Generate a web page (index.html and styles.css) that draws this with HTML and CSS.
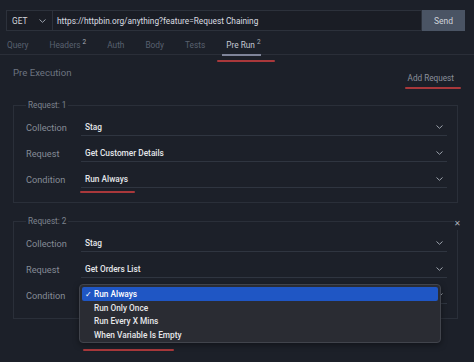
FILE: index.html
```html
<!DOCTYPE html>
<html lang="en">
<head>
  <meta charset="UTF-8">
  <meta name="viewport" content="width=device-width, initial-scale=1.0">
  <title>Pre Run</title>
  <link rel="stylesheet" href="styles.css">
</head>
<body>
  <div class="topbar">
    <div class="method">
      <span>GET</span>
      <svg class="chev" width="7" height="4" viewBox="0 0 7 4"><path d="M0.5 0.5 L3.5 3.3 L6.5 0.5" fill="none" stroke="currentColor" stroke-width="1"/></svg>
    </div>
    <div class="url">https://httpbin.org/anything?feature=Request Chaining</div>
    <button class="send">Send</button>
  </div>

  <div class="tabs">
    <span class="tab">Query</span>
    <span class="tab">Headers <sup>2</sup></span>
    <span class="tab">Auth</span>
    <span class="tab">Body</span>
    <span class="tab">Tests</span>
    <span class="tab active">Pre Run <sup>2</sup><i class="mark mark-tab"></i></span>
  </div>

  <div class="content">
    <div class="head">
      <h4>Pre Execution</h4>
      <a class="add">Add Request<i class="mark mark-add"></i></a>
    </div>

    <fieldset class="req">
      <legend>Request: 1</legend>
      <div class="row">
        <label>Collection</label>
        <div class="select"><span class="value">Stag</span><svg class="chev" width="7" height="4" viewBox="0 0 7 4"><path d="M0.5 0.5 L3.5 3.3 L6.5 0.5" fill="none" stroke="currentColor" stroke-width="1"/></svg></div>
      </div>
      <div class="row">
        <label>Request</label>
        <div class="select"><span class="value">Get Customer Details</span><svg class="chev" width="7" height="4" viewBox="0 0 7 4"><path d="M0.5 0.5 L3.5 3.3 L6.5 0.5" fill="none" stroke="currentColor" stroke-width="1"/></svg></div>
      </div>
      <div class="row">
        <label>Condition</label>
        <div class="select"><span class="value">Run Always</span><svg class="chev" width="7" height="4" viewBox="0 0 7 4"><path d="M0.5 0.5 L3.5 3.3 L6.5 0.5" fill="none" stroke="currentColor" stroke-width="1"/></svg><i class="mark mark-cond"></i></div>
      </div>
    </fieldset>

    <div class="req-wrap">
      <fieldset class="req">
        <legend>Request: 2</legend>
        <div class="row">
          <label>Collection</label>
          <div class="select"><span class="value">Stag</span><svg class="chev" width="7" height="4" viewBox="0 0 7 4"><path d="M0.5 0.5 L3.5 3.3 L6.5 0.5" fill="none" stroke="currentColor" stroke-width="1"/></svg></div>
        </div>
        <div class="row">
          <label>Request</label>
          <div class="select"><span class="value">Get Orders List</span><svg class="chev" width="7" height="4" viewBox="0 0 7 4"><path d="M0.5 0.5 L3.5 3.3 L6.5 0.5" fill="none" stroke="currentColor" stroke-width="1"/></svg></div>
        </div>
        <div class="row">
          <label>Condition</label>
          <div class="select open"><span class="value">Run Always</span><svg class="chev" width="7" height="4" viewBox="0 0 7 4"><path d="M0.5 0.5 L3.5 3.3 L6.5 0.5" fill="none" stroke="currentColor" stroke-width="1"/></svg></div>
        </div>
      </fieldset>
      <span class="close">&#x2715;</span>
      <ul class="menu">
        <li class="on"><span class="check">&#x2713;</span>Run Always</li>
        <li>Run Only Once</li>
        <li>Run Every X Mins</li>
        <li>When Variable Is Empty</li>
      </ul>
      <i class="mark mark-menu"></i>
    </div>
  </div>
</body>
</html>
```

FILE: styles.css
```css
html {
  background-color: #1c2029;
}

body {
  margin: 0;
  min-height: 362px;
  background-color: #1c2029;
  font-family: "Roboto", "Liberation Sans", sans-serif;
  color: #e3e6ea;
  font-size: 8.3px;
}

/* URL bar */
.topbar {
  display: flex;
  height: 21px;
  margin: 10px 9px 0 6px;
}

.method {
  width: 47px;
  box-sizing: border-box;
  display: flex;
  align-items: center;
  justify-content: space-between;
  padding: 0 6px 0 5px;
  border: 1px solid #2c313b;
  background-color: #1a1d25;
  color: #d3d6dc;
}

.url {
  flex: 1;
  display: flex;
  align-items: center;
  padding: 0 4px;
  border: 1px solid #2c313b;
  border-left: none;
  background-color: #1a1d25;
  color: #dadde2;
  white-space: nowrap;
  overflow: hidden;
}

.send {
  width: 43px;
  border: none;
  background-color: #4a5464;
  color: #cfd3da;
  font-family: inherit;
  font-size: 8.5px;
  padding: 0;
}

/* tabs */
.tabs {
  display: flex;
  gap: 21px;
  margin-top: 7px;
  padding-left: 7px;
  height: 16px;
  border-bottom: 1px solid #2a2e38;
  font-size: 8.3px;
}

.tab {
  position: relative;
  line-height: 14px;
  color: #596070;
}

.tab sup {
  font-size: 6.5px;
  line-height: 0;
  color: #a8adb6;
}

.tab.active {
  color: #c5c9d4;
}

.tab.active::after {
  content: "";
  position: absolute;
  left: -4px;
  right: 0;
  bottom: -2px;
  height: 2px;
  background-color: #7f8499;
}

/* red annotation strokes */
.mark {
  position: absolute;
  height: 2px;
  border-radius: 1px;
  background-color: #a9383b;
}

.mark-tab {
  left: -9px;
  width: 58px;
  top: 22px;
}

.mark-add {
  left: -3px;
  right: -7px;
  top: 15px;
}

.mark-cond {
  left: -1px;
  width: 55px;
  bottom: -6px;
}

.mark-menu {
  left: 70px;
  width: 91px;
  top: 134px;
}

/* body */
.content {
  padding: 0 16px 0 13px;
}

.head {
  display: flex;
  justify-content: space-between;
  height: 44px;
}

.head h4 {
  margin: 11px 0 0 0;
  font-size: 9.6px;
  font-weight: 400;
  line-height: 14px;
  color: #6d7480;
}

.add {
  position: relative;
  margin: 17px 4px 0 0;
  font-size: 8.2px;
  line-height: 12px;
  color: #8b909c;
}

.req {
  margin: 0;
  padding: 3px 10px 10px 12px;
  border: 1px solid #2a2f39;
}

.req legend {
  padding: 0 2px;
  margin-left: 0;
  font-size: 8.2px;
  line-height: 12px;
  color: #7d838e;
}

.req-wrap {
  position: relative;
  margin-top: 12px;
}

.close {
  position: absolute;
  right: -3px;
  top: 3px;
  padding: 1px 0;
  font-size: 8px;
  line-height: 10px;
  color: #a9aeb8;
  background-color: #1c2029;
}

.row {
  display: grid;
  grid-template-columns: 55px 1fr;
  align-items: center;
  height: 26px;
}

.row label {
  font-size: 9.2px;
  color: #858b96;
}

.select {
  position: relative;
  display: flex;
  align-items: center;
  justify-content: space-between;
  height: 18px;
  box-sizing: border-box;
  padding: 0 4px;
  border-bottom: 1px solid #2f3540;
  color: #e4e6ea;
  font-weight: 500;
}

.select.open .value {
  visibility: hidden;
}

.chev {
  color: #9ca2ac;
}

/* native-style option menu */
.menu {
  position: absolute;
  z-index: 2;
  left: 66px;
  right: 17px;
  top: 69px;
  margin: 0;
  padding: 2px 2px 1px;
  list-style: none;
  background-color: #2a2c33;
  border: 1px solid #41444c;
  border-radius: 4px;
  box-shadow: 0 2px 6px rgba(0, 0, 0, 0.4);
}

.menu li {
  position: relative;
  height: 13.5px;
  line-height: 14px;
  padding-left: 12px;
  color: #e6e7ea;
  font-size: 8.3px;
  font-weight: 500;
}

.menu li.on {
  background-color: #1f56c4;
  border-radius: 2px;
  color: #fff;
}

.check {
  position: absolute;
  left: 3px;
}
```
